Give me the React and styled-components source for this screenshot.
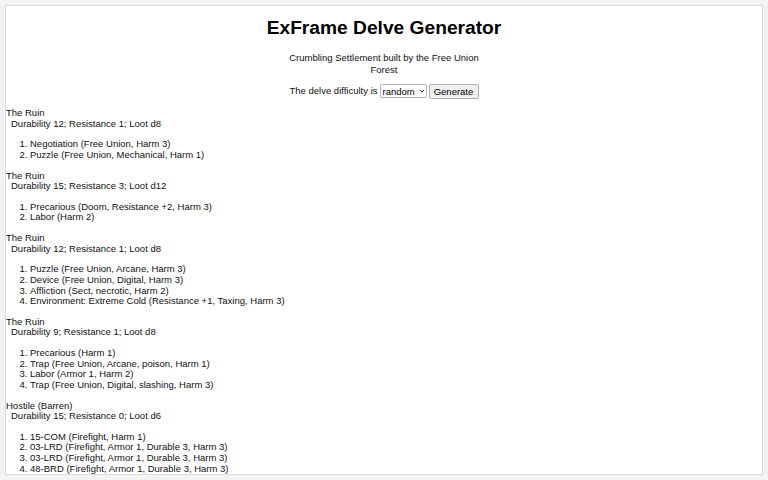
import React from 'react'
import styled, { createGlobalStyle } from 'styled-components'

const delves = [
  {
    name: 'The Ruin',
    stats: 'Durability 12; Resistance 1; Loot d8',
    features: ['Negotiation (Free Union, Harm 3)', 'Puzzle (Free Union, Mechanical, Harm 1)'],
  },
  {
    name: 'The Ruin',
    stats: 'Durability 15; Resistance 3; Loot d12',
    features: ['Precarious (Doom, Resistance +2, Harm 3)', 'Labor (Harm 2)'],
  },
  {
    name: 'The Ruin',
    stats: 'Durability 12; Resistance 1; Loot d8',
    features: [
      'Puzzle (Free Union, Arcane, Harm 3)',
      'Device (Free Union, Digital, Harm 3)',
      'Affliction (Sect, necrotic, Harm 2)',
      'Environment: Extreme Cold (Resistance +1, Taxing, Harm 3)',
    ],
  },
  {
    name: 'The Ruin',
    stats: 'Durability 9; Resistance 1; Loot d8',
    features: [
      'Precarious (Harm 1)',
      'Trap (Free Union, Arcane, poison, Harm 1)',
      'Labor (Armor 1, Harm 2)',
      'Trap (Free Union, Digital, slashing, Harm 3)',
    ],
  },
  {
    name: 'Hostile (Barren)',
    stats: 'Durability 15; Resistance 0; Loot d6',
    features: [
      '15-COM (Firefight, Harm 1)',
      '03-LRD (Firefight, Armor 1, Durable 3, Harm 3)',
      '03-LRD (Firefight, Armor 1, Durable 3, Harm 3)',
      '48-BRD (Firefight, Armor 1, Durable 3, Harm 3)',
    ],
  },
]

const App = () => {
  return (
    <>
      <GlobalStyle />
      <Page>
        <Header>
          <Title>ExFrame Delve Generator</Title>
          <Summary>
            Crumbling Settlement built by the Free Union
            <br />
            Forest
          </Summary>
          <Controls>
            The delve difficulty is
            <SelectWrap>
              <Select defaultValue="random">
                <option value="random">random</option>
                <option value="easy">easy</option>
                <option value="hard">hard</option>
              </Select>
              <Chevron viewBox="0 0 8 5" aria-hidden="true">
                <path d="M1 1 L4 4 L7 1" fill="none" stroke="#222" strokeWidth="1.3" />
              </Chevron>
            </SelectWrap>
            <Button>Generate</Button>
          </Controls>
        </Header>
        {delves.map((d, i) => (
          <Delve key={i}>
            <div>{d.name}</div>
            <Stats>{d.stats}</Stats>
            <Features>
              {d.features.map((f, j) => (
                <li key={j}>{f}</li>
              ))}
            </Features>
          </Delve>
        ))}
      </Page>
    </>
  )
}

export default App

const GlobalStyle = createGlobalStyle`
html, body {
  margin: 0;
  height: 100%;
  overflow: hidden;
  background: #f3f3f3;
}
body {
  padding: 5px;
  box-sizing: border-box;
  font-family: "Liberation Sans", Arial, sans-serif;
  color: #111;
}
#root { height: 100%; }
`

const Page = styled.div`
height: 100%;
box-sizing: border-box;
background: #fff;
border: 1px solid #dcdcdc;
overflow: hidden;
font-size: 9.5px;
line-height: 10.6px;
`

const Header = styled.header`
text-align: center;
padding-top: 10px;
`

const Title = styled.h1`
margin: 0 0 12px;
font-size: 19.2px;
line-height: 24px;
font-weight: bold;
color: #000;
`

const Summary = styled.p`
margin: 0 0 8px;
font-size: 9.5px;
line-height: 11.5px;
`

const Controls = styled.div`
display: flex;
justify-content: center;
align-items: center;
gap: 2px;
font-size: 9.5px;
height: 16px;
margin-bottom: 9px;
`

const SelectWrap = styled.span`
position: relative;
display: inline-flex;
`

const Select = styled.select`
appearance: none;
font-family: "Liberation Sans", Arial, sans-serif;
font-size: 9.5px;
width: 47px;
height: 14px;
padding: 0 0 0 2px;
border: 1px solid #b4b4b4;
border-radius: 2px;
background: #fff;
color: #000;
`

const Chevron = styled.svg`
position: absolute;
right: 2px;
top: 5px;
width: 6px;
height: 4px;
pointer-events: none;
`

const Button = styled.button`
font-family: "Liberation Sans", Arial, sans-serif;
font-size: 9.5px;
width: 50px;
height: 15px;
padding: 0;
border: 1px solid #b0b0b0;
border-radius: 2px;
background: #efefef;
color: #000;
`

const Delve = styled.section`
margin-bottom: 10.2px;
`

const Stats = styled.div`
padding-left: 5px;
`

const Features = styled.ol`
margin: 10px 0 0;
padding-left: 24px;
`
